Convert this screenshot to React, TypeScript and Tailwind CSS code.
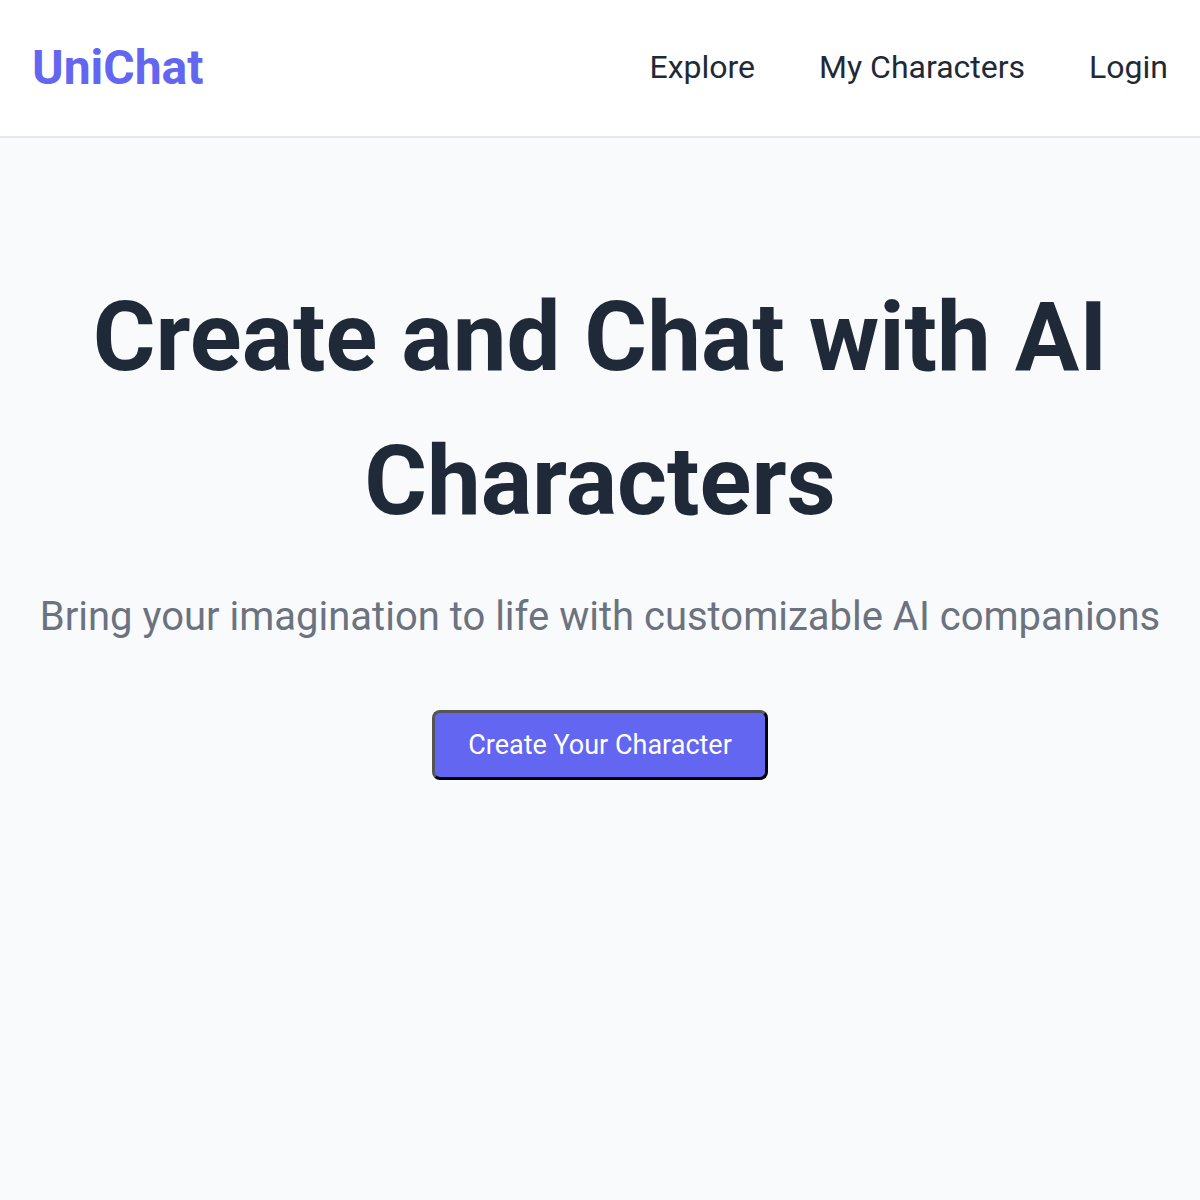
import React from 'react';

const navLinks = ['Explore', 'My Characters', 'Login'];

export default function App() {
  return (
    <div className="min-h-screen bg-[#f9fafb] font-['Roboto',sans-serif]">
      {/* Header */}
      <header className="bg-white border-b-2 border-[#e5e7eb] h-[138px] px-8 flex items-center justify-between">
        <a href="#" className="text-[48px] font-bold text-[#6366f1] leading-none">
          UniChat
        </a>
        <nav className="flex items-center gap-[64px] -mt-[2px]">
          {navLinks.map((link) => (
            <a key={link} href="#" className="text-[32px] text-[#1f2937] leading-none">
              {link}
            </a>
          ))}
        </nav>
      </header>

      {/* Hero */}
      <main className="flex flex-col items-center text-center pt-[127px] px-8">
        <h1 className="text-[96px] font-bold leading-[1.5] text-[#1f2937]">
          Create and Chat with AI Characters
        </h1>
        <p className="mt-[34px] text-[40px] leading-[1.5] text-[#6b7280] whitespace-nowrap">
          Bring your imagination to life with customizable AI companions
        </p>
        <button className="mt-[63px] px-[33px] pt-[12px] pb-[11px] rounded-lg bg-[#6366f1] text-white text-[27px] leading-[1.5] border-[3px] border-t-[#555] border-l-[#555] border-b-black border-r-black">
          Create Your Character
        </button>
      </main>
    </div>
  );
}
